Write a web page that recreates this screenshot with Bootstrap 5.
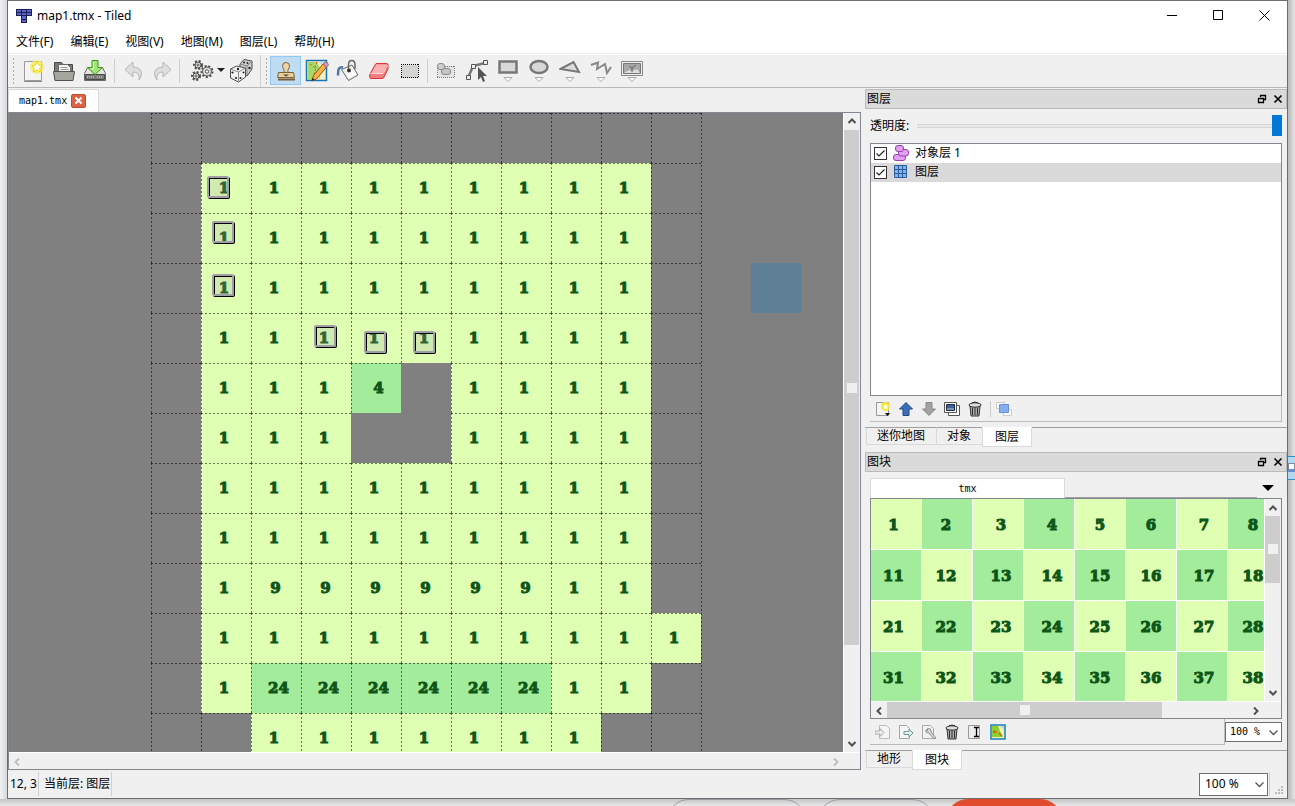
<!DOCTYPE html>
<html lang="zh-CN">
<head>
<meta charset="utf-8">
<meta name="viewport" content="width=device-width, initial-scale=1">
<title>map1.tmx - Tiled</title>
<link href="https://cdn.jsdelivr.net/npm/bootstrap@5.3.0/dist/css/bootstrap.min.css" rel="stylesheet">
<style>
  body { height: 100vh; overflow: hidden; font: 12px/16px "Noto Sans", "Noto Sans CJK SC", sans-serif; color: #000; background: #e6e6e8; }
  button, select, input { font: inherit; color: inherit; }
  button { background: none; border: 0; padding: 0; }
  svg { display: block; flex: none; }
  .edge { flex: 0 0 7px; background: linear-gradient(90deg, #f0f2f4, #d6d8dc); }
  .edge-right { background: linear-gradient(90deg, #b9b9b9, #e6e6e6); display: flex; flex-direction: column; justify-content: center; }
  .peek { height: 24px; margin-top: 136px; background: #b5d9ec; border: solid #2a93c9; border-width: 1px 0; padding: 6px 0; }
  .peek span { display: block; height: 9px; background: #fff; border: 1px solid #7b8ca0; border-bottom: 3px solid #5e92d6; }
  .behind { flex: 0 0 7px; overflow: hidden; background: linear-gradient(#c4c4c4, #e9e9eb); padding-left: 666px; gap: 10px; }
  .pill { flex: none; width: 141px; height: 46px; border: 1px solid #9a9aa6; border-radius: 23px; }
  .pill-short { width: 118px; }
  .pill-red { background: #e04c2c; border-color: #e04c2c; }
  .app { background: #f0f0f0; border: 1px solid #6d6d6d; min-width: 0; }
  .title-bar { height: 29px; background: #fff; padding: 0 2px 0 8px; gap: 5px; }
  .win-btn { width: 41px; height: 29px; display: flex; align-items: center; justify-content: center; }
  .menu-bar { height: 24px; background: #fff; border-bottom: 1px solid #ececec; padding: 2px 0 0 8px; gap: 17px; }
  .tool-bar { height: 34px; border-top: 1px solid #fff; border-bottom: 1px solid #b9b9b9; }
  .tool { width: 31px; height: 29px; display: flex; align-items: center; justify-content: center; }
  .tool-slim { width: 29px; }
  .tool.on { background: #c0dcf3; border: 1px solid #90c8f6; }
  .grip { width: 3px; height: 27px; margin: 0 2px 0 4px; background: radial-gradient(circle, #aaa 1px, transparent 1px) 0 0 / 3px 4px; }
  .rule { width: 1px; height: 24px; background: #cfcfcf; }
  .rule-tight { margin: 0 2px; }
  .work { padding-top: 1px; gap: 4px; min-height: 0; }
  .doc-tab { height: 23px; background: #fff; border: 1px solid #d9d9d9; border-bottom: 0; padding: 0 12px 0 10px; gap: 4px; }
  .pix { font-family: "DejaVu Sans Mono", "Liberation Mono", monospace; font-size: 10px; }
  .close-x { width: 15px; height: 14px; border-radius: 2px; background: #de6344; border: 1px solid #c04a30; display: flex; align-items: center; justify-content: center; }
  .view-box { border: 1px solid #828790; min-height: 0; }
  .canvas-area { background: #808080; overflow: hidden; min-width: 0; }
  .map-grid { position: relative; display: grid; grid-template-columns: repeat(11, 50px); grid-auto-rows: 50px; width: 551px; margin: 0 auto; }
  .cell, .map-edge {
    --dash: rgba(0, 0, 0, .55);
    background-image: repeating-linear-gradient(90deg, var(--dash) 0 2px, transparent 2px 4px), repeating-linear-gradient(var(--dash) 0 2px, transparent 2px 4px);
    background-size: 100% 1px, 1px 100%; background-repeat: no-repeat;
  }
  .map-edge { position: absolute; right: 0; top: 0; width: 1px; height: 100%; }
  .cell.hole { background-image: none; }
  .cell, .tile { display: flex; align-items: center; justify-content: center; font: 900 15px/20px "DejaVu Serif", serif; color: #0e5518; -webkit-text-stroke: 1px #0e5518; padding-top: 1px; }
  .lime { background-color: #dfffb3; }
  .mint { background-color: #a2ec9c; }
  .cell.lean-left { padding-right: 3px; }
  .cell.lean-right { padding-left: 6px; }
  .object { position: absolute; width: 22px; height: 22px; border: 2px solid #a0a0a4; border-radius: 2px; background: rgba(160, 160, 164, .22); box-shadow: 1px 1px 0 #000, inset 1px 1px 0 #000; }
  .cursor-tile { position: absolute; width: 50px; height: 50px; background: #5f7f97; }
  .bar-v { width: 17px; flex: none; border-left: 1px solid #fff; }
  .bar-h { height: 17px; border-top: 1px solid #fff; }
  .bar-btn { width: 16px; height: 17px; flex: none; display: flex; align-items: center; justify-content: center; }
  .thumb { background: #cdcdcd; display: flex; align-items: center; justify-content: center; }
  .bar-v .thumb { margin-right: 1px; }
  .thumb::after { content: ""; width: 10px; height: 10px; background: #f0f0f0; }
  .dock-col { flex: 0 0 422px; min-width: 0; }
  .dock-head { height: 20px; background: #dadada; border: 1px solid #bbb; padding: 0 3px 0 1px; gap: 6px; }
  .dock-body { padding: 0 5px; min-height: 0; min-width: 0; }
  .opacity-row { height: 34px; gap: 8px; }
  .opacity-row input { appearance: none; height: 21px; margin: 0; background: linear-gradient(#d6d6d6, #d6d6d6 1px, #e7eaea 1px, #e7eaea 3px, #d6d6d6 3px) center / 100% 4px no-repeat; min-width: 0; }
  .opacity-row input::-webkit-slider-thumb { appearance: none; width: 10px; height: 21px; background: #0078d7; border: 0; border-radius: 0; }
  .tree { border: 1px solid #828790; background: #fff; flex: 253 1 0; min-height: 0; }
  .tree-row { height: 19px; padding-left: 3px; gap: 6px; }
  .tree-row.on { background: #d9d9d9; }
  .tree-row input { appearance: none; width: 13px; height: 13px; margin: 0; border: 1px solid #333; background: #fff; }
  .tree-row input:checked { background: #fff url("data:image/svg+xml,%3Csvg xmlns='http://www.w3.org/2000/svg' viewBox='0 0 11 11'%3E%3Cpath d='M1.5 5.5l2.5 2.5 5.5-5.5' fill='none' stroke='%23222' stroke-width='1.2'/%3E%3C/svg%3E"); }
  .small-tools { height: 26px; border: solid #bbb; border-width: 0 1px 1px 0; padding-left: 4px; gap: 5px; }
  .small-tools button { width: 18px; height: 18px; display: flex; align-items: center; justify-content: center; }
  .small-tools .rule { height: 16px; margin: 0 -1px 0 1px; }
  .dock-tabs { height: 20px; margin-top: 5px; padding-left: 1px; background: linear-gradient(#a0a0a0, #a0a0a0) top / 100% 1px no-repeat; }
  .dock-tab { height: 18px; padding: 0 11px 0 10px; border: 1px solid #d9d9d9; border-top-color: #a0a0a0; border-right-width: 0; }
  .dock-tab.on { height: 20px; background: #fff; border: 1px solid #d9d9d9; border-top-color: #fff; padding: 0 12px 1px 12px; }
  .set-tabs { height: 20px; margin-top: 6px; }
  .set-tab { width: 195px; background: #fff; border: 1px solid #d9d9d9; border-bottom: 0; }
  .set-line { border-bottom: 1px solid #a0a0a0; margin-right: 5px; }
  .tile-box { border: 1px solid #828790; background: #fff; flex: 221 1 0; min-height: 0; min-width: 0; }
  .tile-grid { display: grid; grid-template-columns: repeat(8, 50px); grid-auto-rows: 50px; gap: 1px; overflow: hidden; min-width: 0; min-height: 0; flex: 1 1 0; }
  .tile:nth-child(8n+1) { padding-right: 5px; }
  .tile:nth-child(8n+2) { padding-right: 2px; }
  .tile:nth-child(8n+3), .tile:nth-child(8n+4) { padding-left: 6px; }
  .tile:nth-child(8n+7) { padding-left: 4px; }
  .combo { position: relative; }
  .combo select { appearance: none; border: 1px solid #707070; background: #fff; border-radius: 0; }
  .combo svg { position: absolute; right: 4px; top: 50%; margin-top: -3px; pointer-events: none; }
  .status { height: 28px; padding-left: 2px; }
  .status .rule { margin: 0 5px 0 1px; }
</style>
</head>
<body class="d-flex flex-column">
<div class="d-flex flex-grow-1" style="min-height:0">
  <div class="edge"></div>
  <div class="app d-flex flex-column flex-grow-1">

    <header class="title-bar d-flex align-items-center">
      <svg width="16" height="16" viewBox="0 0 16 16"><path d="M0 1h16v7h-5v7H5V8H0z" fill="#1d2050"/><path d="M1 2h4v2H1zM6 2h4v2H6zM11 2h4v2h-4zM1 5h4v2H1zM6 5h4v2H6zM11 5h4v2h-4zM6 8h4v3H6zM6 12h4v2H6z" fill="#5962c8"/></svg>
      <span class="flex-grow-1">map1.tmx - Tiled</span>
      <button class="win-btn" aria-label="最小化"><svg width="11" height="11"><path d="M0 5.500h10" stroke="#000"/></svg></button>
      <button class="win-btn" aria-label="最大化"><svg width="11" height="11"><path d="M.5.5h9v9h-9z" fill="none" stroke="#000"/></svg></button>
      <button class="win-btn" aria-label="关闭"><svg width="11" height="11"><path d="M.5.5l10 10M10.500.5l-10 10" stroke="#000"/></svg></button>
    </header>

    <nav class="menu-bar d-flex align-items-center">
      <button>文件(F)</button><button>编辑(E)</button><button>视图(V)</button><button>地图(M)</button><button>图层(L)</button><button>帮助(H)</button>
    </nav>

    <div class="tool-bar d-flex align-items-center" role="toolbar">
      <span class="grip"></span>
      <button class="tool" aria-label="新建"><svg width="24" height="24"><path d="M3.500 2.500h17v19h-17z" fill="#f4f4f2" stroke="#9b9d98"/><path d="M3 22.500h18" stroke="#8a8c87"/><circle cx="16" cy="8" r="7" fill="#f7ee5a" opacity=".75"/><path d="M16 2.500l1.700 3.500 3.800.5-2.800 2.700.7 3.800-3.400-1.900-3.400 1.900.7-3.800-2.800-2.700 3.800-.5z" fill="#fff" stroke="#edd400"/></svg></button>
      <button class="tool" aria-label="打开"><svg width="24" height="24"><path d="M2.500 20V3.500h7l1.500 2h9.500V12" fill="#777a74" stroke="#484a46"/><path d="M6.500 5.500h9l3 3V15h-12z" fill="#f4f4f2" stroke="#686b65"/><path d="M8.500 8.500h7M8.500 10.500h8" stroke="#999"/><path d="M1.500 12.500h21L21 21.500H3z" fill="#a3a79d" stroke="#51544e"/></svg></button>
      <button class="tool" aria-label="保存"><svg width="24" height="24"><path d="M1.500 14.500l3-6h15l3 6v7h-21z" fill="#e2e4de" stroke="#686a66"/><path d="M2.500 15.500h19v5h-19z" fill="#7a7c78" stroke="#484a46"/><path d="M4 18h7M14 18h6" stroke="#ddd" stroke-dasharray="1 1"/><path d="M9 1.500h6v7h4.500L12 15.500 4.500 8.500H9z" fill="#a4e37c" stroke="#3a9a12"/><path d="M10.500 3v7h-2.500" fill="none" stroke="#e2f9d4"/></svg></button>
      <span class="rule mx-1"></span>
      <button class="tool tool-slim" aria-label="撤销"><svg width="22" height="22"><path d="M10 2v5c8 0 11 6 6 13 1-6-2-8-6-8v5L2 9.500z" fill="#dedede" stroke="#b5b5b5"/></svg></button>
      <button class="tool tool-slim" aria-label="重做"><svg width="22" height="22"><path d="M11 2v5c-8 0-11 6-6 13-1-6 2-8 6-8v5l8-7.500z" fill="#dedede" stroke="#b5b5b5"/></svg></button>
      <span class="rule rule-tight"></span>
      <button class="tool ms-1" aria-label="命令"><svg width="24" height="24"><g fill="#dcdcda" stroke="#4d4f4b"><g fill="none" stroke-width="2" stroke-dasharray="2 1.800"><circle cx="8" cy="6" r="4"/><circle cx="6" cy="17" r="4"/><circle cx="17" cy="12.500" r="5.500"/></g><circle cx="8" cy="6" r="3"/><circle cx="6" cy="17" r="3"/><circle cx="17" cy="12.500" r="4.500"/></g><g fill="#fff" stroke="#555"><circle cx="8" cy="6" r="1"/><circle cx="6" cy="17" r="1"/><circle cx="17" cy="12.500" r="1.700"/></g></svg></button>
      <svg width="8" height="5"><path d="M0 0h8L4 4z" fill="#222"/></svg>
      <button class="tool" aria-label="随机"><svg width="26" height="26" stroke="#4c4c4c" stroke-linejoin="round"><path d="M12 6l4-4.500 8 1.500v8l-5 7-7-3z" fill="#cfcfcf"/><path d="M12 6l7 2 5-5M19 8v9" fill="none" stroke="#888"/><path d="M2.500 11l6-3 9 2v9l-7 5-8-4z" fill="#f4f4f4"/><path d="M2.500 11l8 3 7-4M10.500 14v9" fill="none" stroke="#888"/><g fill="#222" stroke="none"><circle cx="4.500" cy="14.500" r="1.100"/><circle cx="8" cy="20" r="1.100"/><circle cx="10" cy="11" r="1.200"/><circle cx="12.500" cy="20" r="1"/><circle cx="15.500" cy="14.500" r="1"/><circle cx="16" cy="4.500" r="1"/><circle cx="19.500" cy="5" r="1"/><circle cx="21.500" cy="10" r="1.200"/></g></svg></button>
      <span class="rule mx-1" style="height:32px"></span>
      <span class="grip ms-0"></span>
      <button class="tool on" aria-label="图章刷"><svg width="22" height="22"><path d="M3 19.500h17" stroke="#7a5a2c" stroke-width="2"/><path d="M3.500 12.500h15l1 5h-17z" fill="#e6cf9f" stroke="#7f6236"/><path d="M9 12.500c1-3-1.500-4-1.500-6.500a3.500 3.500 0 0 1 7 0c0 2.500-2.500 3.500-1.500 6.500z" fill="#ead7ae" stroke="#7f6236"/><path d="M8 14.500h6l-3 2z" fill="#59431f"/></svg></button>
      <button class="tool" aria-label="地形刷"><svg width="24" height="24"><path d="M1.500 1.500h20v20h-20z" fill="#f7efc0" stroke="#1673b5" stroke-width="1.500"/><path d="M3 3h9l3 6-5 12H3z" fill="#a4d867"/><path d="M14 3h6v8z" fill="#b8e4f4"/><path d="M5 5l6 4-2 6 6 4M12 3l-2 6" stroke="#e0581f" stroke-dasharray="2 2" fill="none"/><path d="M7 21.500l1.500-5L18 5l3.500 3-10 12z" fill="#f8b04a" stroke="#8a5310"/><path d="M18 5l2-2q3 0 3.500 3l-2 2z" fill="#d59bb8" stroke="#9b6b84"/><path d="M6.500 22l1-3 2 1.500z" fill="#222"/></svg></button>
      <button class="tool" aria-label="填充"><svg width="24" height="24"><path d="M7 8.500c-5-1-5 3-5 8" fill="none" stroke="#4b76ad" stroke-width="2.500"/><path d="M5.500 10.500L16 6l6 10-9.500 5.500z" fill="#eeeeea" stroke="#6a6c68"/><path d="M10 14l7-4 3.500 5.500-7.500 4z" fill="#fcfcfc"/><path d="M12.500 11V6c0-6 6.500-6 6.500 0v4" fill="none" stroke="#666" stroke-width="1.500"/><circle cx="13" cy="11.500" r="2" fill="#333"/></svg></button>
      <button class="tool" aria-label="橡皮"><svg width="22" height="22"><path d="M2 14l5-9q.5-1.500 2-1.500h9.500q2 0 1.500 2V9l-4 8q-.5 1.500-2 1.500H3q-2 0-1-4.500z" fill="#f08080" stroke="#d33"/><path d="M8 4.500h11L14.500 13H3.500z" fill="#f9b0b0"/><path d="M2.500 13.500H15l4.500-8.500" fill="none" stroke="#fcd8d8"/></svg></button>
      <button class="tool" aria-label="矩形选择"><svg width="20" height="16"><path d="M2 2h16v13H2z" fill="#d3d5d0"/><path d="M1 1.500h18M1 14.500h18M1.500 1v14M18.500 1v14" stroke="#000" stroke-dasharray="1 1"/></svg></button>
      <span class="rule rule-tight"></span>
      <button class="tool" aria-label="选择对象"><svg width="20" height="18"><path d="M2 4h16v11H2z" fill="#e2e2e2"/><path d="M1 4.500h18M1 15.500h18M1.500 4v12M18.500 4v12" stroke="#777" stroke-dasharray="1 1"/><rect x="5.500" y="6.500" width="9" height="6" rx="2.500" fill="#c5c5c5" stroke="#8b8b8b"/><rect x="1.500" y="1.500" width="7" height="6" rx="2.500" fill="#cdcdcd" stroke="#8b8b8b"/></svg></button>
      <button class="tool" aria-label="编辑多边形"><svg width="24" height="24"><path d="M3 19L8 7l12-3" fill="none" stroke="#777" stroke-width="2.500"/><g fill="#eee" stroke="#555"><path d="M1.500 16.500h4v4h-4zM6.500 5.500h4v4h-4zM18.500 1.500h4v4h-4z"/></g><path d="M13 8v13l3-3 2 5 2-1-2-5h4z" fill="#555"/></svg></button>
      <button class="tool" aria-label="插入矩形"><svg width="22" height="24"><path d="M2.500 2.500h17v11h-17z" fill="#d8d8d8" stroke="#777" stroke-width="2.500"/><path d="M7 18.500h8l-4 4z" fill="#fff" stroke="#aaa"/></svg></button>
      <button class="tool" aria-label="插入椭圆"><svg width="22" height="24"><ellipse cx="11" cy="8" rx="8.500" ry="6" fill="#d8d8d8" stroke="#777" stroke-width="2.500"/><path d="M7 18.500h8l-4 4z" fill="#fff" stroke="#aaa"/></svg></button>
      <button class="tool" aria-label="插入多边形"><svg width="22" height="24"><path d="M1.500 10l13-7 5.500 10z" fill="#ddd" stroke="#777" stroke-width="2"/><path d="M7 18.500h8l-4 4z" fill="#fff" stroke="#aaa"/></svg></button>
      <button class="tool" aria-label="插入折线"><svg width="22" height="24"><path d="M1 6l7-2.500-1 6.500 8-5 2 9 4-6" fill="none" stroke="#888" stroke-width="2"/><path d="M7 18.500h8l-4 4z" fill="#fff" stroke="#aaa"/></svg></button>
      <button class="tool" aria-label="插入图块"><svg width="22" height="24"><path d="M.5 2.500h21v14H.5z" fill="#eee" stroke="#888"/><path d="M2.500 4.500h17v10h-17z" fill="#a8a8a8" stroke="#777"/><path d="M3 14l5-3 3 1 5-2 3 4z" fill="#ddd"/><path d="M11 13V9l-3-2M11 9l4-3" stroke="#666" fill="none"/><path d="M7 18.500h8l-4 4z" fill="#fff" stroke="#aaa"/></svg></button>
    </div>

    <main class="work d-flex flex-grow-1">
      <section class="d-flex flex-column flex-grow-1" style="min-width:0">
        <div class="d-flex">
          <div class="doc-tab d-flex align-items-center"><span class="pix">map1.tmx</span><button class="close-x" aria-label="关闭 map1.tmx"><svg width="9" height="9"><path d="M1.500 1.500l6 6M7.500 1.500l-6 6" stroke="#fff" stroke-width="2"/></svg></button></div>
        </div>
        <div class="view-box d-flex flex-column flex-grow-1">
          <div class="d-flex flex-grow-1" style="min-height:0">
            <div class="canvas-area flex-grow-1"><div class="map-grid" id="map"></div></div>
            <div class="bar-v d-flex flex-column">
              <button class="bar-btn" aria-label="上"><svg width="8" height="6"><path d="M.5 5L4 1.500 7.500 5" fill="none" stroke="#505050" stroke-width="2"/></svg></button>
              <div class="thumb" style="height:80.6%"></div>
              <button class="bar-btn mt-auto" aria-label="下"><svg width="8" height="6"><path d="M.5 1L4 4.500 7.500 1" fill="none" stroke="#505050" stroke-width="2"/></svg></button>
            </div>
          </div>
          <div class="bar-h d-flex justify-content-between pe-3">
            <button class="bar-btn" aria-label="左"><svg width="6" height="8"><path d="M5 .5L1.500 4 5 7.500" fill="none" stroke="#bfbfbf" stroke-width="2"/></svg></button>
            <button class="bar-btn" aria-label="右"><svg width="6" height="8"><path d="M1 .5L4.500 4 1 7.500" fill="none" stroke="#bfbfbf" stroke-width="2"/></svg></button>
          </div>
        </div>
      </section>

      <aside class="dock-col d-flex flex-column">
        <div class="dock-head d-flex align-items-center"><span class="flex-grow-1">图层</span>
          <button aria-label="浮动"><svg width="10" height="10"><path d="M3.500 3V1.500h5v4H7M1.500 4.500h5v4h-5zM3 1.500h6M1 4.500h6" fill="none" stroke="#000" stroke-width="1.300"/></svg></button>
          <button aria-label="关闭"><svg width="10" height="10"><path d="M1.500 1.500l7 7M8.500 1.500l-7 7" stroke="#000" stroke-width="1.600"/></svg></button></div>
        <div class="dock-body d-flex flex-column" style="flex:313 1 0">
          <div class="opacity-row d-flex align-items-center"><label for="opacity">透明度:</label><input id="opacity" class="flex-grow-1" type="range" value="100"></div>
          <div class="tree">
            <div class="tree-row d-flex align-items-center"><input type="checkbox" id="l1" checked><svg width="16" height="16"><g fill="#e3a0f2" stroke="#9640a8"><rect x=".5" y="9.500" width="12" height="6" rx="2.500"/><rect x="5.500" y="4.500" width="10" height="6.500" rx="2.500"/><rect x="2.500" y=".5" width="8" height="6" rx="2.500"/></g></svg><label for="l1">对象层 1</label></div>
            <div class="tree-row on d-flex align-items-center"><input type="checkbox" id="l2" checked><svg width="16" height="16"><path d="M1.500 1.500h12v12h-12zM5.500 1.500v12M9.500 1.500v12M1.500 5.500h12M1.500 9.500h12" fill="#85b4ec" stroke="#2a5c9c"/></svg><label for="l2">图层</label></div>
          </div>
          <div class="small-tools d-flex align-items-center">
            <button aria-label="新建图层"><svg width="16" height="16"><path d="M1.500 1.500h12v13h-12z" fill="#f4f4f2" stroke="#999"/><circle cx="10.500" cy="5.500" r="4.500" fill="#f5e631"/><path d="M10.500 2.500l1 2 2 .5-1.500 1.500.5 2-2-1-2 1 .5-2L7.500 5l2-.5z" fill="#fff"/><path d="M10 12h5l-2.500 3z"/></svg></button>
            <button aria-label="上移"><svg width="16" height="16"><path d="M8 1.500L14.500 8H11v6.500H5V8H1.500z" fill="#3a6fb5" stroke="#1f4a85"/></svg></button>
            <button aria-label="下移"><svg width="16" height="16"><path d="M8 14.500L1.500 8H5V1.500h6V8h3.500z" fill="#a2a2a2" stroke="#888"/></svg></button>
            <button aria-label="复制"><svg width="16" height="16"><path d="M4.500 4.500h11v10h-11z" fill="#fff" stroke="#555"/><path d="M.5 1.500h12v10H.5z" fill="#fff" stroke="#555"/><path d="M2.500 3.500h8v6h-8z" fill="#3e5f98" stroke="#222d48"/><path d="M3 8h7" stroke="#bcd"/></svg></button>
            <button aria-label="删除"><svg width="16" height="16"><path d="M3 5h10l-1 10H4z" fill="#aaa" stroke="#333"/><path d="M5.500 7v7M8 7v7M10.500 7v7" stroke="#333"/><path d="M5 2Q8 0 11 2" fill="none" stroke="#222"/><ellipse cx="8" cy="4" rx="6" ry="2.200" fill="#ddd" stroke="#222"/></svg></button>
            <span class="rule"></span>
            <button aria-label="高亮"><svg width="16" height="16"><path d="M.5 1.500h8v6h-8zM7.500 8.500h8v6h-8z" fill="#fff" stroke="#ccc"/><path d="M3.500 3.500h9v8h-9z" fill="#85aef0" stroke="#6993d8"/></svg></button>
          </div>
        </div>
        <div class="dock-tabs d-flex"><button class="dock-tab">迷你地图</button><button class="dock-tab">对象</button><button class="dock-tab on">图层</button></div>

        <div class="dock-head d-flex align-items-center" style="margin-top:5px"><span class="flex-grow-1">图块</span>
          <button aria-label="浮动"><svg width="10" height="10"><path d="M3.500 3V1.500h5v4H7M1.500 4.500h5v4h-5zM3 1.500h6M1 4.500h6" fill="none" stroke="#000" stroke-width="1.300"/></svg></button>
          <button aria-label="关闭"><svg width="10" height="10"><path d="M1.500 1.500l7 7M8.500 1.500l-7 7" stroke="#000" stroke-width="1.600"/></svg></button></div>
        <div class="dock-body d-flex flex-column" style="flex:273 1 0">
          <div class="set-tabs d-flex"><button class="set-tab pix">tmx</button><span class="set-line flex-grow-1"></span><button class="me-1 pe-1" aria-label="图块集列表"><svg width="12" height="6"><path d="M0 0h12L6 6z"/></svg></button></div>
          <div class="tile-box d-flex flex-column">
            <div class="d-flex flex-grow-1" style="min-height:0">
              <div class="tile-grid" id="tiles"></div>
              <div class="bar-v d-flex flex-column" style="background:#f0f0f0">
                <button class="bar-btn" aria-label="上"><svg width="8" height="6"><path d="M.5 5L4 1.500 7.500 5" fill="none" stroke="#505050" stroke-width="2"/></svg></button>
                <div class="thumb" style="height:33%"></div>
                <button class="bar-btn mt-auto" aria-label="下"><svg width="8" height="6"><path d="M.5 1L4 4.500 7.500 1" fill="none" stroke="#505050" stroke-width="2"/></svg></button>
              </div>
            </div>
            <div class="bar-h d-flex" style="background:#f0f0f0;padding-right:17px">
              <button class="bar-btn" aria-label="左"><svg width="6" height="8"><path d="M5 .5L1.500 4 5 7.500" fill="none" stroke="#505050" stroke-width="2"/></svg></button>
              <div class="thumb" style="width:70%"></div>
              <button class="bar-btn ms-auto" aria-label="右"><svg width="6" height="8"><path d="M1 .5L4.500 4 1 7.500" fill="none" stroke="#505050" stroke-width="2"/></svg></button>
            </div>
          </div>
          <div class="d-flex align-items-center">
            <div class="small-tools d-flex align-items-center flex-grow-1">
              <button aria-label="导入"><svg width="16" height="16"><path d="M4.500 1.500h7l3 3v10h-10z" fill="#f5f5f5" stroke="#bbb"/><path d="M0 7h5V4.500L9 8.500l-4 4V10H0z" fill="#eee" stroke="#aaa"/></svg></button>
              <button aria-label="导出"><svg width="16" height="16"><path d="M1.500 1.500h7l3 3v10h-10z" fill="#f5f5f5" stroke="#9aa"/><path d="M6 7.500h5V5l4 4-4 4v-2.500H6z" fill="#e4f1f2" stroke="#6d9a9c"/></svg></button>
              <button aria-label="属性"><svg width="16" height="16"><path d="M1.500 1.500h8l3 3v10h-11z" fill="#f2f2f2" stroke="#aaa"/><path d="M6 5q4-2 4 3l5 6-2 1-5-6q-4 0-3-3l2 1z" fill="#ddd" stroke="#888"/></svg></button>
              <button aria-label="删除"><svg width="16" height="16"><path d="M3 5h10l-1 10H4z" fill="#aaa" stroke="#333"/><path d="M5.500 7v7M8 7v7M10.500 7v7" stroke="#333"/><path d="M5 2Q8 0 11 2" fill="none" stroke="#222"/><ellipse cx="8" cy="4" rx="6" ry="2.200" fill="#ddd" stroke="#222"/></svg></button>
              <button aria-label="重命名"><svg width="16" height="16"><path d="M1.500 1.500h11v13h-11z" fill="#eee" stroke="#999"/><path d="M7 3.500h5M7 12.500h5M9.500 3.500v9" stroke="#000" stroke-width="1.300"/></svg></button>
              <button aria-label="编辑地形"><svg width="16" height="16"><path d="M1 1h14v14H1z" fill="#f5efb5" stroke="#1580c0" stroke-width="1.500"/><path d="M2 2h6l2 5 3 6H2z" fill="#8bd02c"/><path d="M10 2h4v4z" fill="#aee0f2"/><path d="M4 6v3M4 8h3M9 9l3 3" stroke="#e35420" stroke-width="1.300"/></svg></button>
            </div>
            <div class="combo"><select class="pix" aria-label="图块缩放" style="width:57px;height:20px;padding-left:4px"><option>100 %</option></select><svg width="9" height="7"><path d="M.5 1.500l4 4 4-4" fill="none" stroke="#555" stroke-width="1.300"/></svg></div>
          </div>
        </div>
        <div class="dock-tabs d-flex"><button class="dock-tab">地形</button><button class="dock-tab on">图块</button></div>
      </aside>
    </main>

    <footer class="status d-flex align-items-center">
      <span>12, 3</span><span class="rule"></span><span>当前层: 图层</span><span class="rule"></span>
      <div class="combo ms-auto"><select aria-label="缩放" style="width:69px;height:23px;padding-left:5px"><option>100 %</option></select><svg width="9" height="7"><path d="M.5 1.500l4 4 4-4" fill="none" stroke="#555" stroke-width="1.300"/></svg></div>
      <span class="rule"></span>
      <svg class="align-self-end mb-1 me-1" width="8" height="8" fill="#bbb"><path d="M6 0h2v2H6zM3 3h2v2H3zM6 3h2v2H6zM0 6h2v2H0zM3 6h2v2H3zM6 6h2v2H6z"/></svg>
    </footer>
  </div>
  <div class="edge edge-right"><div class="peek"><span></span></div></div>
</div>
<div class="behind d-flex"><span class="pill"></span><span class="pill pill-short"></span><span class="pill pill-short pill-red"></span></div>

<script src="https://cdn.jsdelivr.net/npm/bootstrap@5.3.0/dist/js/bootstrap.bundle.min.js"></script>
<script>
  // 0 is an empty cell, -1 a cleared one; other values are tile numbers.
  const rows = [
    [0,0,0,0,0,0,0,0,0,0,0],
    [0,1,1,1,1,1,1,1,1,1,0],
    [0,1,1,1,1,1,1,1,1,1,0],
    [0,1,1,1,1,1,1,1,1,1,0],
    [0,1,1,1,1,1,1,1,1,1,0],
    [0,1,1,1,4,-1,1,1,1,1,0],
    [0,1,1,1,-1,-1,1,1,1,1,0],
    [0,1,1,1,1,1,1,1,1,1,0],
    [0,1,1,1,1,1,1,1,1,1,0],
    [0,1,9,9,9,9,9,9,1,1,0],
    [0,1,1,1,1,1,1,1,1,1,1],
    [0,1,24,24,24,24,24,24,1,1,0],
    [0,0,1,1,1,1,1,1,1,0,0]
  ];
  const lean = { 1: ' lean-left', 4: ' lean-right', 24: ' lean-right' };
  const shade = n => (Math.floor((n - 1) / 10) + (n - 1) % 10) % 2 ? 'mint' : 'lime';
  const map = document.getElementById('map');
  const add = (parent, cls, text) => {
    const el = document.createElement('div');
    el.className = cls;
    if (text) el.textContent = text;
    parent.append(el);
    return el;
  };
  rows.flat().forEach(n => {
    if (n > 0) add(map, 'cell ' + shade(n) + (lean[n] || ''), n);
    else add(map, n ? 'cell hole' : 'cell');
  });
  add(map, 'map-edge');
  const place = (cls, x, y) => {
    const el = add(map, cls);
    el.style.left = x + 'px';
    el.style.top = y + 'px';
  };
  [[56,63],[61,108],[61,161],[163,212],[213,218],[262,218]].forEach(p => place('object', ...p));
  place('cursor-tile', 600, 150);

  const tiles = document.getElementById('tiles');
  for (let r = 0; r < 4; r++)
    for (let c = 1; c <= 8; c++) add(tiles, 'tile ' + shade(r * 10 + c), r * 10 + c);
</script>
</body>
</html>
